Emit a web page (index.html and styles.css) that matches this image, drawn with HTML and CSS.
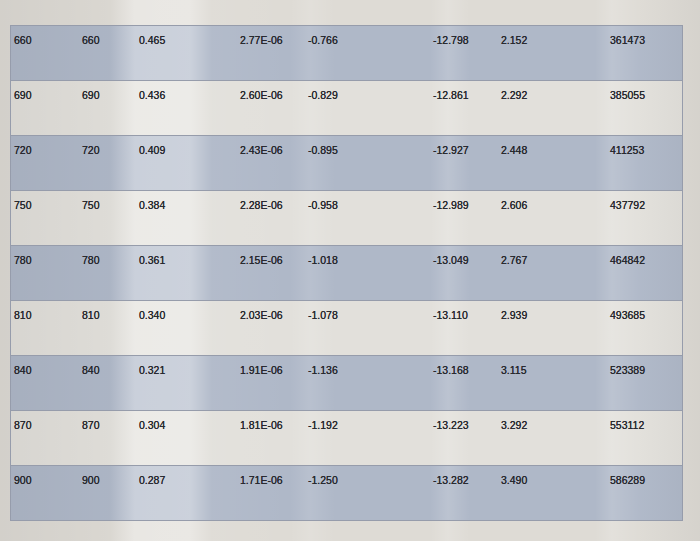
FILE: index.html
```html
<!DOCTYPE html>
<html>
<head>
<meta charset="utf-8">
<link rel="stylesheet" href="styles.css">
</head>
<body>
<div class="sheet">
  <div class="row shaded"><span>660</span><span>660</span><span>0.465</span><span>2.77E-06</span><span>-0.766</span><span>-12.798</span><span>2.152</span><span>361473</span></div>
  <div class="row plain"><span>690</span><span>690</span><span>0.436</span><span>2.60E-06</span><span>-0.829</span><span>-12.861</span><span>2.292</span><span>385055</span></div>
  <div class="row shaded"><span>720</span><span>720</span><span>0.409</span><span>2.43E-06</span><span>-0.895</span><span>-12.927</span><span>2.448</span><span>411253</span></div>
  <div class="row plain"><span>750</span><span>750</span><span>0.384</span><span>2.28E-06</span><span>-0.958</span><span>-12.989</span><span>2.606</span><span>437792</span></div>
  <div class="row shaded"><span>780</span><span>780</span><span>0.361</span><span>2.15E-06</span><span>-1.018</span><span>-13.049</span><span>2.767</span><span>464842</span></div>
  <div class="row plain"><span>810</span><span>810</span><span>0.340</span><span>2.03E-06</span><span>-1.078</span><span>-13.110</span><span>2.939</span><span>493685</span></div>
  <div class="row shaded"><span>840</span><span>840</span><span>0.321</span><span>1.91E-06</span><span>-1.136</span><span>-13.168</span><span>3.115</span><span>523389</span></div>
  <div class="row plain"><span>870</span><span>870</span><span>0.304</span><span>1.81E-06</span><span>-1.192</span><span>-13.223</span><span>3.292</span><span>553112</span></div>
  <div class="row shaded"><span>900</span><span>900</span><span>0.287</span><span>1.71E-06</span><span>-1.250</span><span>-13.282</span><span>3.490</span><span>586289</span></div>
</div>
</body>
</html>
```
FILE: styles.css
```css
:root {
  --light: linear-gradient(90deg,
    rgba(0,0,0,0.05) 0px,
    rgba(0,0,0,0.02) 110px,
    rgba(255,255,255,0.34) 135px,
    rgba(255,255,255,0.36) 190px,
    rgba(255,255,255,0.05) 212px,
    rgba(255,255,255,0.0) 290px,
    rgba(255,255,255,0.12) 310px,
    rgba(255,255,255,0.0) 335px,
    rgba(255,255,255,0.0) 430px,
    rgba(255,255,255,0.16) 448px,
    rgba(255,255,255,0.0) 470px,
    rgba(255,255,255,0.0) 595px,
    rgba(255,255,255,0.16) 612px,
    rgba(255,255,255,0.02) 640px,
    rgba(0,0,0,0.04) 700px);
}
html, body {
  margin: 0;
  padding: 0;
  width: 700px;
  height: 541px;
  overflow: hidden;
}
body {
  background-color: #dedbd5;
  background-image: var(--light);
  font-family: "Liberation Sans", Arial, sans-serif;
  font-size: 10.5px;
  color: #26272d;
  padding-top: 25px;
  box-sizing: border-box;
}
.sheet {
  margin-left: 10px;
  width: 671px;
  border: 1px solid #969cab;
  border-bottom: none;
}
.row {
  display: grid;
  grid-template-columns: 68px 57px 101px 68px 125px 68px 109px 1fr;
  height: 55px;
  box-sizing: border-box;
  padding: 8px 0 0 3px;
  line-height: 13px;
  border-bottom: 1px solid #969cab;
  background-image: var(--light);
  background-attachment: fixed;
}
.row span {
  text-shadow: 0 0 0.4px #26272d;
}
.shaded {
  background-color: #afb8c8;
}
.plain {
  background-color: #e2e0db;
}
```
